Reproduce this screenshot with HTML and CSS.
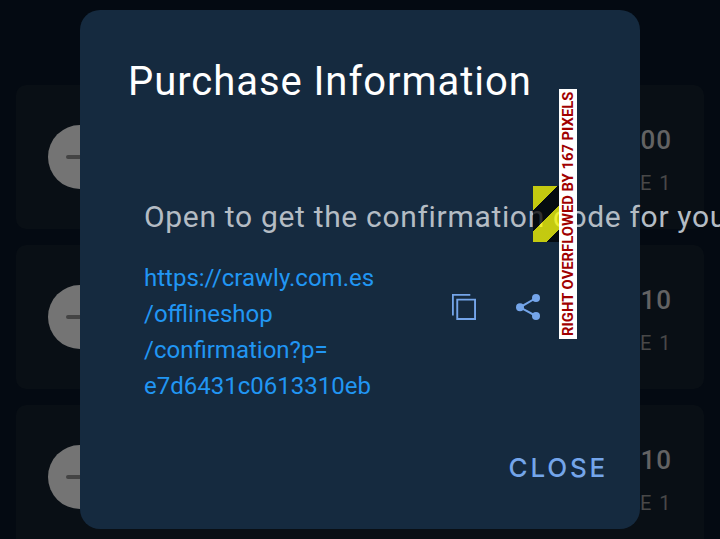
FILE: index.html
```html
<!DOCTYPE html>
<html lang="en">

<head>
    <meta charset="UTF-8">
    <meta name="viewport" content="width=device-width, initial-scale=1.0">
    <title>Purchase Information</title>
    <link rel="stylesheet" href="styles.css">
</head>

<body>
    <div class="list">
        <div class="card">
            <div class="minus"><span></span></div>
            <div class="price">
                <span class="amount">00</span>
                <span class="qty">E 1</span>
            </div>
        </div>
        <div class="card">
            <div class="minus"><span></span></div>
            <div class="price">
                <span class="amount">10</span>
                <span class="qty">E 1</span>
            </div>
        </div>
        <div class="card">
            <div class="minus"><span></span></div>
            <div class="price">
                <span class="amount">10</span>
                <span class="qty">E 1</span>
            </div>
        </div>
    </div>

    <div class="dialog">
        <h1 class="title">Purchase Information</h1>
        <div class="content">
            <p class="lead">Open to get the confirmation code for you</p>
            <div class="link-row">
                <a class="link">https://crawly.com.es<br>/offlineshop<br>/confirmation?p=<br>e7d6431c0613310eb</a>
                <div class="actions">
                    <svg class="icon" viewBox="0 0 24 26" aria-hidden="true">
                        <path d="M0 0h18.300v1.800H1.800V21.600H0z" />
                        <path fill-rule="evenodd" d="M4.300 4.700H24V26H4.300zM6.200 6.600V24.100H22.100V6.600z" />
                    </svg>
                    <svg class="icon" viewBox="0 0 24 26" aria-hidden="true">
                        <circle cx="20" cy="4" r="4" />
                        <circle cx="4" cy="13.300" r="4" />
                        <circle cx="20" cy="22" r="4" />
                        <path class="icon-line" d="M20 4L4 13.300L20 22" />
                    </svg>
                </div>
            </div>
        </div>
        <div class="footer">
            <button class="close">CLOSE</button>
        </div>
    </div>

    <!-- overflow warning painted over the dialog -->
    <div class="hazard"></div>
    <div class="overflow-label">RIGHT OVERFLOWED BY 167 PIXELS</div>
</body>

</html>
```

FILE: styles.css
```css
html,
body {
  height: 100%;
}
body {
  margin: 0;
  background-color: #040a12;
  font-family: Roboto, sans-serif;
  overflow: hidden;
  position: relative;
}
.list {
  padding: 85px 16px 0;
  display: flex;
  flex-direction: column;
  row-gap: 16px;
}
.card {
  height: 144px;
  flex-shrink: 0;
  padding: 0 32px 0 32px;
  display: flex;
  align-items: center;
  justify-content: space-between;
  background-color: #090f15;
  border-radius: 10px;
}
.minus {
  width: 64px;
  height: 64px;
  display: flex;
  align-items: center;
  padding-left: 18px;
  box-sizing: border-box;
  background-color: #747474;
  border-radius: 50%;
}
.minus span {
  width: 28px;
  height: 4px;
  background-color: #444;
  border-radius: 2px;
}
.price {
  padding-top: 5px;
  display: flex;
  flex-direction: column;
  align-items: flex-end;
  row-gap: 16px;
}
.amount {
  color: #636363;
  font-size: 26px;
  font-weight: 500;
  letter-spacing: 1px;
}
.qty {
  color: #484848;
  font-size: 20px;
  letter-spacing: 1.5px;
}
.dialog {
  position: absolute;
  top: 10px;
  left: 80px;
  width: 560px;
  height: 519px;
  box-sizing: border-box;
  padding: 48px 32px 0 49px;
  display: flex;
  flex-direction: column;
  background-color: #152a3f;
  border-radius: 20px;
}
.title {
  margin: 0 0 0 -1px;
  color: #fff;
  font-size: 40px;
  font-weight: 400;
  line-height: 48px;
  letter-spacing: 0.95px;
}
.content {
  padding: 91px 0 0 15px;
}
.lead {
  margin: 0;
  color: #b4bcc4;
  font-size: 30px;
  line-height: 40px;
  letter-spacing: 0.68px;
  white-space: nowrap;
}
.link-row {
  margin-top: 23px;
  display: flex;
  align-items: flex-start;
}
.link {
  width: 308px;
  color: #2196f3;
  font-size: 24px;
  line-height: 36px;
}
.actions {
  display: flex;
  column-gap: 40px;
  margin-top: 34px;
}
.icon {
  width: 24px;
  height: 26px;
  fill: #74a5ea;
}
.icon-line {
  fill: none;
  stroke: #74a5ea;
  stroke-width: 2;
}
.footer {
  margin-top: 48px;
  display: flex;
  justify-content: flex-end;
}
.close {
  padding: 0;
  border: none;
  background: none;
  color: #74a5ea;
  font-family: Inter, sans-serif;
  font-size: 26px;
  font-weight: 500;
  letter-spacing: 2.800px;
}
.hazard {
  position: absolute;
  top: 186px;
  left: 533px;
  width: 26px;
  height: 56px;
  background-image: repeating-linear-gradient(135deg, rgba(255, 255, 0, 0.75) 0 17px, rgba(0, 0, 0, 0.75) 17px 32px);
}
.overflow-label {
  position: absolute;
  top: 89px;
  left: 559px;
  width: 18px;
  height: 250px;
  display: flex;
  align-items: center;
  justify-content: center;
  writing-mode: vertical-rl;
  transform: rotate(180deg);
  background-color: #fff;
  color: #a00000;
  font-family: Roboto, sans-serif;
  font-size: 14.800px;
  font-weight: 700;
  white-space: nowrap;
}
```
